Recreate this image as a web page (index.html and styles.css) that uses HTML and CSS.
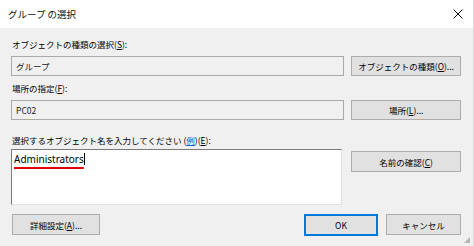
FILE: index.html
```html
<!DOCTYPE html>
<html lang="ja">
<head>
  <meta charset="UTF-8" />
  <title>グループ の選択</title>
  <link rel="stylesheet" href="styles.css">
</head>
<body>
  <div class="dialog">
    <div class="titlebar">
      <span class="title">グループ の選択</span>
      <button class="close" aria-label="閉じる">
        <svg width="10" height="10" viewBox="0 0 10 10">
          <path d="M0.5 0.5 L9.5 9.5 M9.5 0.5 L0.5 9.5" stroke="#111" stroke-width="1" fill="none"/>
        </svg>
      </button>
    </div>

    <div class="content">
      <div class="label">オブジェクトの種類の選択(<u>S</u>):</div>
      <div class="row">
        <div class="field">グループ</div>
        <button class="btn">オブジェクトの種類(<u>O</u>)...</button>
      </div>

      <div class="label">場所の指定(<u>F</u>):</div>
      <div class="row">
        <div class="field">PC02</div>
        <button class="btn">場所(<u>L</u>)...</button>
      </div>

      <div class="label label-gap">選択するオブジェクト名を入力してください (<a class="link" href="#">例</a>)(<u>E</u>):</div>
      <div class="row row-top">
        <div class="entry"><span class="typed">Administrators</span><span class="caret"></span></div>
        <button class="btn btn-check">名前の確認(<u>C</u>)</button>
      </div>

      <div class="footer">
        <button class="btn btn-advanced">詳細設定(<u>A</u>)...</button>
        <button class="btn btn-ok">OK</button>
        <button class="btn btn-cancel">キャンセル</button>
      </div>
    </div>
    <div class="grip"></div>
  </div>
</body>
</html>
```

FILE: styles.css
```css
* {
  margin: 0;
  padding: 0;
  box-sizing: border-box;
}

body {
  width: 474px;
  height: 246px;
  overflow: hidden;
  font-family: "Noto Sans CJK JP", "Noto Sans", sans-serif;
  font-size: 8.5px;
  color: #000;
  background: #f0f0f0;
}

.dialog {
  position: relative;
  height: 246px;
  border-right: 1px solid #dcdcdc;
}

.titlebar {
  height: 28px;
  background: #fff;
  display: flex;
  align-items: center;
  justify-content: space-between;
  padding: 0 8px 0 8px;
}

.title {
  font-size: 9.5px;
  color: #111;
}

.close {
  background: none;
  border: none;
  width: 12px;
  height: 12px;
  display: flex;
  align-items: center;
  justify-content: center;
  margin-right: 1px;
}

.content {
  display: flex;
  flex-direction: column;
  padding: 0 12px 0 11px;
}

.label {
  height: 12px;
  line-height: 12px;
  margin-top: 10px;
  padding-left: 1px;
}

.row + .label {
  margin-top: 6px;
}

.row + .label.label-gap {
  margin-top: 14px;
}

u {
  text-decoration: underline;
  text-underline-offset: 1px;
}

.link {
  color: #0066cc;
  text-decoration: underline;
}

.row {
  display: flex;
  gap: 7px;
  margin-top: 6px;
}

.row-top {
  margin-top: 3px;
  align-items: flex-start;
}

.field {
  width: 334px;
  height: 20px;
  line-height: 18px;
  padding-left: 4px;
  border: 1px solid #a9a9a9;
  background: #f0f0f0;
  color: #222;
}

.btn {
  width: 110px;
  height: 20px;
  background: #e1e1e1;
  border: 1px solid #adadad;
  font-family: inherit;
  font-size: 8.5px;
  color: #000;
  line-height: 18px;
  text-align: center;
}

.entry {
  width: 332px;
  height: 56px;
  background: #fff;
  border: 1px solid #7a7a7a;
  border-right-color: #e0e0e0;
  border-bottom-color: #e0e0e0;
  padding: 3px 0 0 2px;
  font-family: "Noto Sans", sans-serif;
  font-size: 10px;
  line-height: 13px;
  color: #000;
}

.typed {
  text-decoration: underline;
  text-decoration-color: #e00000;
  text-decoration-thickness: 2px;
  text-underline-offset: 4px;
}

.caret {
  display: inline-block;
  width: 1px;
  height: 12px;
  background: #000;
  vertical-align: -2px;
}

.btn-check {
  margin-top: 2px;
  margin-left: 2px;
  height: 21px;
}

.footer {
  display: flex;
  gap: 8px;
  margin-top: 9px;
  padding-left: 1px;
}

.btn-advanced {
  width: 88px;
  height: 21px;
}

.btn-ok {
  width: 74px;
  height: 22px;
  margin-left: auto;
  border: 2px solid #0078d7;
  line-height: 18px;
}

.btn-cancel {
  width: 75px;
  height: 21px;
}

.grip {
  position: absolute;
  right: 3px;
  bottom: 3px;
  width: 6px;
  height: 6px;
  background:
    radial-gradient(circle, #b0b0b0 0.7px, transparent 0.8px) 0 0 / 2px 2px;
  clip-path: polygon(100% 0, 100% 100%, 0 100%);
}
```
